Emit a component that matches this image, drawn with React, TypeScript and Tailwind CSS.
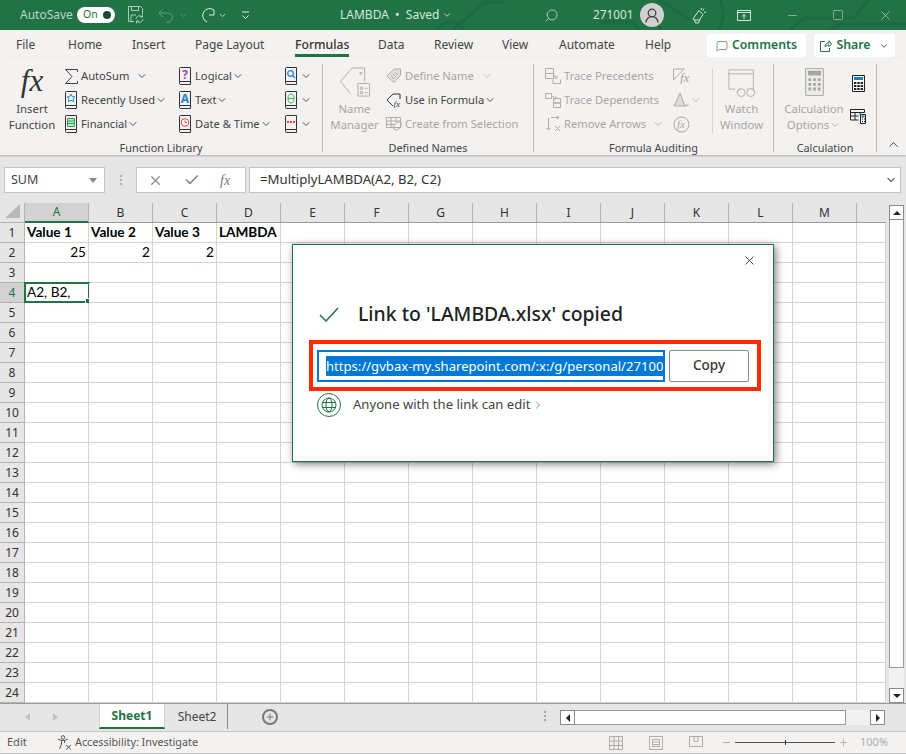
import { ChevronDown, ChevronRight, ChevronUp, X, Check, Search, Minus, Square, Plus, MessageSquare } from 'lucide-react'
import type { ReactNode } from 'react'

const columns = ['A', 'B', 'C', 'D', 'E', 'F', 'G', 'H', 'I', 'J', 'K', 'L', 'M', '']
const rows = Array.from({ length: 24 }, (_, i) => i + 1)

const cells: Record<string, { text: string; bold?: boolean; right?: boolean }> = {
  A1: { text: 'Value 1', bold: true },
  B1: { text: 'Value 2', bold: true },
  C1: { text: 'Value 3', bold: true },
  D1: { text: 'LAMBDA', bold: true },
  A2: { text: '25', right: true },
  B2: { text: '2', right: true },
  C2: { text: '2', right: true },
  A4: { text: 'A2, B2,' },
}

const tabs = [
  { name: 'File', cls: 'w-[52px] ml-4' },
  { name: 'Home', cls: 'w-[64px]' },
  { name: 'Insert', cls: 'w-[63px]' },
  { name: 'Page Layout', cls: 'w-[100px]' },
  { name: 'Formulas', cls: 'w-[83px]', active: true },
  { name: 'Data', cls: 'w-[56px]' },
  { name: 'Review', cls: 'w-[68px]' },
  { name: 'View', cls: 'w-[57px]' },
  { name: 'Automate', cls: 'w-[86px]' },
  { name: 'Help', cls: 'w-[62px]' },
]

function Caret({ grey }: { grey?: boolean }) {
  return <ChevronDown size={12} strokeWidth={1.8} className={`shrink-0 ${grey ? 'text-[#b5b3b1]' : 'text-[#444444]'}`} />
}

// little book used by the function library buttons
function Book({ children }: { children: ReactNode }) {
  return (
    <svg width="14" height="18" viewBox="0 0 14 18" className="shrink-0">
      <path d="M1.500 14.500V1.500a1 1 0 0 1 1-1h10v14h-11zM1.500 14.500v2a1 1 0 0 0 1 1h10v-3" fill="none" stroke="#333" />
      {children}
    </svg>
  )
}

function BookText({ ch, color }: { ch: string; color: string }) {
  return (
    <text x="7" y="11.500" textAnchor="middle" fontSize="12" fontWeight="700" fill={color} fontFamily="Noto Sans, sans-serif">
      {ch}
    </text>
  )
}

function GreyIcon({ d, w = 16 }: { d: string; w?: number }) {
  return (
    <svg width={w} height="16" viewBox={`0 0 ${w} 16`} fill="none" stroke="#b0aeac" className="shrink-0">
      <path d={d} />
    </svg>
  )
}

function RibbonRow({ icon, label, grey, caret, wide }: { icon: ReactNode; label: string; grey?: boolean; caret?: ReactNode; wide?: boolean }) {
  return (
    <div className="flex h-6 items-center">
      <div className={`flex justify-center ${wide ? 'mr-[3px] w-4' : 'mr-[3px] w-[14px]'}`}>{icon}</div>
      <span className={`whitespace-nowrap ${grey ? 'text-[#a8a6a4]' : 'text-[#444444]'}`}>{label}</span>
      {caret ?? null}
    </div>
  )
}

function BigLabel({ lines, grey, caret }: { lines: string[]; grey?: boolean; caret?: boolean }) {
  return (
    <div className={`mt-[2px] flex flex-col items-center text-[11.4px] leading-4 ${grey ? 'text-[#a8a6a4]' : 'text-[#444444]'}`}>
      {lines.map((l, i) => (
        <span key={l} className="flex items-center whitespace-nowrap">
          {l}
          {caret && i === lines.length - 1 && <Caret grey />}
        </span>
      ))}
    </div>
  )
}

function Group({ cls, label, children }: { cls: string; label: string; children: ReactNode }) {
  return (
    <div className={`flex h-[88px] shrink-0 flex-col border-r border-[#bdbbb9] ${cls}`}>
      <div className="flex h-[74px] shrink-0">{children}</div>
      <div className="h-[14px] text-center text-[10.9px] leading-[20px] text-[#444444]">{label}</div>
    </div>
  )
}

function TitleBar() {
  return (
    <div className="relative flex h-[30px] items-center overflow-hidden bg-[#217346] text-white">
      {/* faint circuit artwork behind the title bar */}
      <svg className="absolute inset-0" width="906" height="30" fill="none" stroke="#1d6a40" strokeWidth="3">
        <circle cx="690" cy="14" r="33" />
        <circle cx="450" cy="36" r="14" />
        <path d="M453 30l32-28h20M640 30l-8-8H600M790 30l14-12h50l14-18M830 30l10-6h66M660 0l30 20" />
      </svg>
      <div className="relative ml-5 w-[57px] text-[12px] text-[#b7d5c4]">AutoSave</div>
      <div className="relative flex h-4 w-[38px] items-center justify-between rounded-full bg-white pl-[6px] pr-1 text-[10.5px] text-[#217346]">
        On
        <span className="h-2 w-2 rounded-full bg-[#1c4a32]" />
      </div>
      <svg className="relative ml-[13px]" width="16" height="18" viewBox="0 0 16 18" fill="none" stroke="#a9cdb9">
        <path d="M6 15.500H.5V.5h12l2 2V8M3.500 .5v4h7v-4M3 15v-6h5" />
        <path d="M8 13a3.500 3.500 0 0 1 6-2.200M15 13a3.500 3.500 0 0 1-6 2.200M14.500 8.500v2.500H12M8.500 17.500V15H11" />
      </svg>
      <svg className="relative ml-[14px]" width="16" height="16" viewBox="0 0 16 16" fill="none" stroke="#5f9d7d">
        <path d="M1 6h9a4.500 4.500 0 0 1 0 9H8M1 6l4-4M1 6l4 4" />
      </svg>
      <ChevronDown size={9} className="relative ml-[5px] text-[#5f9d7d]" />
      <svg className="relative ml-[11px]" width="16" height="16" viewBox="0 0 16 16" fill="none" stroke="#e3efe8">
        <path d="M15 3A7 7 0 1 0 8 15M15 3v5h-5" />
      </svg>
      <ChevronDown size={9} className="relative ml-[3px] text-[#e3efe8]" />
      <svg className="relative ml-[14px]" width="9" height="9" viewBox="0 0 9 9" fill="none" stroke="#e3efe8">
        <path d="M1 1h7M1.500 4.500L4.500 7.500l3-3" />
      </svg>
      <div className="relative ml-[90px] flex w-[204px] items-center gap-[3px] whitespace-nowrap text-[12px] text-[#d5e6dc]">
        LAMBDA&nbsp;&nbsp;•&nbsp;&nbsp;Saved
        <ChevronDown size={10} />
      </div>
      <Search size={15} className="relative -scale-x-100 text-[#c7dfd1]" strokeWidth={1.2} />
      <div className="relative ml-[34px] w-[47px] text-[11.8px] text-[#d5e6dc]">271001</div>
      <div className="relative flex h-6 w-6 items-center justify-center rounded-full bg-[#d0d0d0]">
        <svg width="14" height="15" viewBox="0 0 14 15" fill="none" stroke="#3a3a3a" strokeWidth="1.200">
          <circle cx="7" cy="5" r="3.800" />
          <path d="M1 14.500a6 6 0 0 1 12 0" />
        </svg>
      </div>
      <svg className="relative ml-[26px]" width="17" height="17" viewBox="0 0 17 17" fill="none" stroke="#d5e6dc">
        <path d="M9 3.500l4 4-3.500 5.500H4L3 12zM4.500 13l1 3h3l1-3M11 1l.8 2M14 1.500l-1 2M16 5l-2 .5" />
      </svg>
      <svg className="relative ml-[30px]" width="14" height="11" viewBox="0 0 14 11" fill="none" stroke="#d5e6dc">
        <path d="M.5.5h13v10H.5zM.5 2.500h13M7 9V4.500M5 6.500l2-2 2 2" />
      </svg>
      <Minus size={13} strokeWidth={1} className="relative ml-[35px] text-[#d5e6dc]" />
      <Square size={12} strokeWidth={1} className="relative ml-[33px] text-[#d5e6dc]" />
      <X size={15} strokeWidth={1} className="relative ml-[34px] text-[#d5e6dc]" />
    </div>
  )
}

function TabStrip() {
  return (
    <div className="flex h-[27px] bg-[#f3f2f1] text-[12px] text-[#444444]">
      {tabs.map((t) => (
        <div key={t.name} className={t.cls}>
          <div className={`inline-flex h-[27px] items-center whitespace-nowrap border-b-[3px] pt-[6px] ${t.active ? 'border-[#217346] text-[12.2px] font-medium text-[#333333]' : 'border-transparent'}`}>
            {t.name}
          </div>
        </div>
      ))}
      <div className="flex h-[23px] w-[99px] items-center justify-center gap-1 self-end rounded-[2px] bg-white text-[12.3px] font-semibold text-[#217346]">
        <MessageSquare size={12} strokeWidth={1.3} />
        Comments
      </div>
      <div className="ml-[8px] flex h-[23px] w-[81px] items-center justify-center gap-1 self-end rounded-[2px] bg-white text-[12.3px] font-semibold text-[#217346]">
        <svg width="12" height="12" viewBox="0 0 12 12" fill="none" stroke="#217346">
          <path d="M5 1.500H.5v10h9V8M5 7c0-3 2-4 4-4V.8L11.500 4 9 6.700V5c-2 0-3 .8-4 2z" />
        </svg>
        Share
        <ChevronDown size={10} className="ml-1 text-[#333333]" />
      </div>
    </div>
  )
}

function Ribbon() {
  return (
    <div className="flex h-[98px] items-start bg-[#f3f2f1] pt-[7px] text-[11.2px] shadow-[0_1px_2px_rgba(0,0,0,0.25)]">
      <Group cls="w-[323px]" label="Function Library">
        <div className="flex w-[64px] flex-col items-center">
          <div className="h-[35px] shrink-0 text-center font-['Liberation_Serif',serif] text-[31px] italic leading-[34px] text-[#333333]">fx</div>
          <BigLabel lines={['Insert', 'Function']} />
        </div>
        <div className="flex w-[114px] flex-col">
          <RibbonRow
            label="AutoSum"
            icon={
              <svg width="13" height="15" viewBox="0 0 13 15" fill="none" stroke="#444444" className="shrink-0">
                <path d="M12.500 3V.5H.5L7 7.500.5 14.500h12V12" />
              </svg>
            }
            caret={<span className="ml-[7px]"><Caret /></span>}
          />
          <RibbonRow
            label="Recently Used"
            icon={
              <Book>
                <path d="M7 3l1.200 2.600 2.800.3-2 1.900.6 2.800L7 9.200 4.400 10.600l.6-2.800-2-1.900 2.800-.3z" fill="#fff" stroke="#1e88d8" />
              </Book>
            }
            caret={<Caret />}
          />
          <RibbonRow
            label="Financial"
            icon={
              <Book>
                <path d="M3.500 3.500h7v8h-7zM3.500 6h7M3.500 8.500h7" fill="#bfe3c9" stroke="#2f9e57" />
              </Book>
            }
            caret={<Caret />}
          />
        </div>
        <div className="flex w-[106px] flex-col">
          <RibbonRow label="Logical" icon={<Book><BookText ch="?" color="#a843c2" /></Book>} caret={<Caret />} />
          <RibbonRow label="Text" icon={<Book><BookText ch="A" color="#1e88d8" /></Book>} caret={<Caret />} />
          <RibbonRow
            label="Date & Time"
            icon={
              <Book>
                <circle cx="7" cy="7.500" r="3.800" fill="#fff" stroke="#e8443a" />
                <path d="M7 5.500v2h2" stroke="#e8443a" fill="none" />
              </Book>
            }
            caret={<Caret />}
          />
        </div>
        <div className="flex w-[38px] flex-col">
          <div className="flex h-6 items-center gap-[2px]">
            <Book>
              <circle cx="6.500" cy="6.500" r="2.800" fill="none" stroke="#1e88d8" strokeWidth="1.300" />
              <path d="M8.500 8.500l2.500 2.500" stroke="#1e88d8" strokeWidth="1.500" />
            </Book>
            <Caret />
          </div>
          <div className="flex h-6 items-center gap-[2px]">
            <Book>
              <ellipse cx="7" cy="7.500" rx="3" ry="4.500" fill="none" stroke="#3fae68" />
              <path d="M4 7.500h6" stroke="#3fae68" />
            </Book>
            <Caret />
          </div>
          <div className="flex h-6 items-center gap-[2px]">
            <Book>
              <path d="M3 7h2M6 7h2M9 7h2" stroke="#e8443a" strokeWidth="2" />
            </Book>
            <Caret />
          </div>
        </div>
      </Group>
      <Group cls="w-[211px]" label="Defined Names">
        <div className="flex w-[63px] flex-col items-center">
          <svg width="32" height="31" viewBox="0 0 32 32" fill="none" stroke="#b0aeac" className="mb-[1px] mt-[3px] shrink-0">
            <path d="M11 27L1 15 13 1h13v14M22 5.500a1 1 0 1 0 .1 0" />
            <path d="M19 17h12v13H19zM21.500 21h2.500v2h-2.500zM21.500 25.500h2.500v2h-2.500zM26 22h3M26 26.500h3" />
          </svg>
          <BigLabel grey lines={['Name', 'Manager']} />
        </div>
        <div className="flex flex-col">
          <RibbonRow
            wide
            grey
            label="Define Name"
            icon={
              <svg width="16" height="16" viewBox="0 0 16 16" fill="#e2e0de" stroke="#b0aeac">
                <path d="M1 8L8 1h6.500v6L8 14.500z" />
                <path d="M8 11L5 8M10 9L7 6M12 7L9 4" />
              </svg>
            }
            caret={<span className="ml-[7px]"><Caret grey /></span>}
          />
          <RibbonRow
            wide
            label="Use in Formula"
            icon={
              <svg width="16" height="16" viewBox="0 0 16 16" fill="none" stroke="#333333">
                <path d="M7 14L1 8l6-6h7v5" />
                <text x="7.500" y="15" fontSize="9" fontStyle="italic" fontFamily="Liberation Serif, serif" fill="#333333" stroke="none">fx</text>
              </svg>
            }
            caret={<Caret />}
          />
          <RibbonRow
            wide
            grey
            label="Create from Selection"
            icon={<GreyIcon d="M.5 1.500h14v10H.5zM.5 5h14M.5 8.500h8M5 1.500v10M10 1.500v4M9 14l-2-3 4-5h4v5l-4 3z" />}
          />
        </div>
      </Group>
      <Group cls="w-[240px]" label="Formula Auditing">
        <div className="flex w-[131px] flex-col pl-[11px]">
          <RibbonRow wide grey label="Trace Precedents" icon={<GreyIcon d="M.5.500h8v5h-8zM.5 5.500h8v5h-8zM9 7l3 3M12 7.500V10H9.500M8 11.500v4h7.500v-4" />} />
          <RibbonRow wide grey label="Trace Dependents" icon={<GreyIcon d="M.5 1.500h6v5h-6zM7 4l4 3M11 4.500V7H8.500M8.500 6.500h7v4.500h-7zM8.500 11h7v4.500h-7z" />} />
          <RibbonRow
            wide
            grey
            label="Remove Arrows"
            icon={<GreyIcon d="M3.500 2v12M1.500 12l2 2 2-2M6 1.500h8M12 0l2 1.500L12 3M10 10l5 5M15 10l-5 5" />}
            caret={<span className="ml-[6px]"><Caret grey /></span>}
          />
        </div>
        <div className="flex w-[47px] flex-col pl-[8px]">
          <div className="flex h-6 items-center">
            <svg width="18" height="16" viewBox="0 0 18 16" fill="none" stroke="#b0aeac">
              <path d="M.5 1h11M.5 1v11M.5 12L11 1" />
              <text x="7" y="14" fontSize="13" fontStyle="italic" fontFamily="Liberation Serif, serif" fill="#a8a6a4" stroke="none">fx</text>
            </svg>
          </div>
          <div className="flex h-6 items-center gap-[1px]">
            <svg width="16" height="16" viewBox="0 0 16 16" fill="#dddbd9" stroke="#b0aeac" className="shrink-0">
              <path d="M7 1L1 14h11zM11 13l2 1.500 3-3" />
            </svg>
            <Caret grey />
          </div>
          <div className="flex h-6 items-center">
            <svg width="17" height="17" viewBox="0 0 17 17" fill="none" stroke="#a8a6a4">
              <circle cx="8.500" cy="8.500" r="7.500" />
              <text x="4" y="12" fontSize="11" fontStyle="italic" fontFamily="Liberation Serif, serif" fill="#a8a6a4" stroke="none">fx</text>
            </svg>
          </div>
        </div>
        <div className="my-[5px] h-[64px] w-px bg-[#d5d3d1]" />
        <div className="flex w-[57px] flex-col items-center">
          <svg width="30" height="28" viewBox="0 0 32 32" fill="none" stroke="#b0aeac" className="mb-[2px] mt-[5px] shrink-0">
            <path d="M1 1h28v22h-8M1 1v22h7M1 5.500h28" />
            <circle cx="15" cy="27" r="4.500" fill="#f3f2f1" />
            <circle cx="26" cy="27" r="4.500" fill="#f3f2f1" />
            <path d="M10 27l4-5M31 27l-4-5" />
          </svg>
          <BigLabel grey lines={['Watch', 'Window']} />
        </div>
      </Group>
      <Group cls="w-[103px]" label="Calculation">
        <div className="ml-[4px] flex w-[72px] flex-col items-center">
          <svg width="19" height="28" viewBox="0 0 20 30" fill="#a8a6a4" stroke="none" className="mb-[3px] mt-[4px] shrink-0">
            <path d="M.5.500h19v29H.5z" fill="#ececeb" stroke="#a8a6a4" />
            <path d="M3 3h14v5H3zM3.500 11h3v3h-3zM8.500 11h3v3h-3zM13.500 11h3v3h-3zM3.500 16h3v3h-3zM8.500 16h3v3h-3zM13.500 16h3v3h-3zM3.500 21h3v3h-3zM8.500 21h3v3h-3zM13.500 21h3v3h-3z" />
          </svg>
          <BigLabel grey lines={['Calculation', 'Options']} caret />
        </div>
        <div className="flex w-4 flex-col items-center gap-[17px] pt-[11px]">
          <svg width="13" height="17" viewBox="0 0 13 17" fill="#222222" className="shrink-0">
            <path d="M.5.500h12v16H.5z" fill="#fff" stroke="#222222" />
            <path d="M2 2h9v3H2z" fill="#1e7ec8" />
            <path d="M2 7h2.400v2H2zM5.300 7h2.400v2H5.300zM8.600 7H11v2H8.600zM2 10h2.400v2H2zM5.300 10h2.400v2H5.300zM8.600 10H11v2H8.600zM2 13h2.400v2H2zM5.300 13h2.400v2H5.300zM8.600 13H11v2H8.600z" />
          </svg>
          <svg width="16" height="15" viewBox="0 0 16 15" fill="none" stroke="#222222" className="shrink-0">
            <path d="M.5.500h14v3H.5zM.5 3.500V11h8M.5 7h8M5 3.500V11M10 3.500v2M10.500 5.500h5v9h-5z" />
            <path d="M11.500 6.500h3v2h-3z" fill="#1e7ec8" stroke="none" />
            <path d="M12 10h1M14 10h1M12 12.500h1M14 12.500h1" />
          </svg>
        </div>
      </Group>
      <div className="flex h-[88px] flex-1 items-end justify-end pr-[5px]">
        <ChevronUp size={15} strokeWidth={1.4} className="text-[#333333]" />
      </div>
    </div>
  )
}

function FormulaBar() {
  return (
    <div className="flex h-[26px] pl-1 pr-[5px]">
      <div className="flex w-[101px] items-center justify-between border border-[#c6c6c6] bg-white pl-[6px] pr-[7px] text-[12.5px] text-[#444444]">
        SUM
        <span className="h-0 w-0 border-x-[4px] border-t-[5px] border-x-transparent border-t-[#8a8a8a]" />
      </div>
      <div className="flex w-[31px] flex-col items-center justify-center gap-[2px]">
        <span className="h-[2px] w-[2px] bg-[#b0b0b0]" />
        <span className="h-[2px] w-[2px] bg-[#b0b0b0]" />
        <span className="h-[2px] w-[2px] bg-[#b0b0b0]" />
      </div>
      <div className="flex w-[110px] items-center border border-[#c6c6c6] bg-white text-[#8a8a8a]">
        <X size={15} strokeWidth={2.2} className="ml-[11px]" />
        <Check size={16} strokeWidth={2.6} className="ml-[21px]" />
        <span className="ml-[20px] font-['Liberation_Serif',serif] text-[14px] italic text-[#777777]">fx</span>
      </div>
      <div className="ml-[3px] flex flex-1 items-center justify-between border border-[#c6c6c6] bg-white pl-[10px] pr-[3px] text-[13.2px] text-[#333333]">
        =MultiplyLAMBDA(A2, B2, C2)
        <ChevronDown size={12} strokeWidth={3} className="text-[#777777]" />
      </div>
    </div>
  )
}

function Sheet() {
  return (
    <div className="grid w-[886px] grid-cols-[25px_repeat(13,64px)_29px] grid-rows-[20px_repeat(24,20px)]">
      <div className="flex items-end justify-end border-b border-r border-[#b4b4b4] bg-[#e6e6e6] p-[3px]">
        <span className="mb-px mr-px h-0 w-0 border-b-[14px] border-l-[15px] border-b-[#b9b9b9] border-l-transparent" />
      </div>
      {columns.map((c, i) => (
        <div
          key={i}
          className={`flex items-center justify-center border-b ${i === 13 ? '' : 'border-r border-r-[#b4b4b4]'} ${c === 'A' ? 'border-b-2 border-b-[#217346] bg-[#d2d2d2] text-[#217346]' : 'border-b-[#9a9a9a] bg-[#e6e6e6] text-[#333333]'} text-[12px]`}
        >
          {c}
        </div>
      ))}
      {rows.map((r) => (
        <div key={r} className="contents">
          <div className={`flex items-center justify-center border-b border-r border-[#b4b4b4] text-[12px] ${r === 4 ? 'bg-[#d2d2d2] text-[#217346]' : 'bg-[#e6e6e6] text-[#333333]'}`}>
            {r}
          </div>
          {columns.map((c, i) => {
            const cell = cells[`${c}${r}`]
            const selected = c === 'A' && r === 4
            return (
              <div
                key={i}
                className={`relative flex items-center overflow-visible whitespace-nowrap border-b border-r border-[#d4d4d4] bg-white px-[2px] font-['Lato',sans-serif] text-[13.6px] text-black ${cell?.right ? 'justify-end' : ''} ${cell?.bold ? 'font-bold' : ''}`}
              >
                {cell?.text}
                {selected && (
                  <span className="absolute -left-[1px] -top-[1px] h-[21px] w-[66px] border-2 border-[#217346]">
                    <span className="absolute -bottom-[3px] -right-[3px] h-[6px] w-[6px] border border-white bg-[#217346]" />
                  </span>
                )}
              </div>
            )
          })}
        </div>
      ))}
    </div>
  )
}

function VerticalScroll() {
  return (
    <div className="ml-[3px] flex h-[498px] w-[15px] flex-col">
      <div className="flex h-[15px] items-center justify-center border border-[#8a8a8a] bg-white">
        <span className="h-0 w-0 border-x-[4px] border-b-[4px] border-x-transparent border-b-[#222222]" />
      </div>
      <div className="h-[448px] border-x border-b border-[#9a9a9a] bg-white" />
      <div className="flex-1 bg-[#f1f1f1]" />
      <div className="flex h-[15px] items-center justify-center border border-[#8a8a8a] bg-white">
        <span className="h-0 w-0 border-x-[4px] border-t-[4px] border-x-transparent border-t-[#222222]" />
      </div>
    </div>
  )
}

function SheetTabs() {
  return (
    <div className="flex h-[28px] border-t border-[#9a9a9a] bg-[#e6e6e6]">
      <div className="flex w-[99px] items-start gap-[23px] pl-[25px] pt-[9px]">
        <span className="h-0 w-0 border-y-[4px] border-r-[5px] border-y-transparent border-r-[#c2c2c2]" />
        <span className="h-0 w-0 border-y-[4px] border-l-[5px] border-y-transparent border-l-[#c2c2c2]" />
      </div>
      <div className="flex h-[25px] w-[66px] items-center justify-center border-x border-b-2 border-x-[#cfcfcf] border-b-[#217346] bg-white text-[12px] font-bold text-[#217346]">
        Sheet1
      </div>
      <div className="flex h-[25px] w-[63px] items-center justify-center border-r border-[#8a8a8a] pl-[2px] text-[12px] text-[#444444]">
        Sheet2
      </div>
      <div className="ml-[34px] mt-[5px] flex h-4 w-4 items-center justify-center rounded-full border-2 border-[#7a7a7a]">
        <Plus size={10} strokeWidth={2.5} className="text-[#7a7a7a]" />
      </div>
      <div className="ml-[266px] flex flex-col gap-[2px] pt-[7px]">
        <span className="h-[2px] w-[2px] bg-[#a8a8a8]" />
        <span className="h-[2px] w-[2px] bg-[#a8a8a8]" />
        <span className="h-[2px] w-[2px] bg-[#a8a8a8]" />
      </div>
      <div className="ml-[14px] mt-[6px] flex h-[15px] w-[325px]">
        <div className="flex w-[15px] items-center justify-center border border-[#8a8a8a] bg-white">
          <span className="h-0 w-0 border-y-[4px] border-r-[4px] border-y-transparent border-r-[#222222]" />
        </div>
        <div className="w-[271px] border-y border-r border-[#9a9a9a] bg-white" />
        <div className="flex-1 bg-[#f1f1f1]" />
        <div className="flex w-[15px] items-center justify-center border border-[#8a8a8a] bg-white">
          <span className="h-0 w-0 border-y-[4px] border-l-[4px] border-y-transparent border-l-[#222222]" />
        </div>
      </div>
    </div>
  )
}

function StatusBar() {
  return (
    <div className="flex h-[23px] items-center border-y border-[#c6c6c6] bg-[#f3f2f1] text-[11px] text-[#555555]">
      <span className="ml-[7px] w-[50px]">Edit</span>
      <svg width="15" height="15" viewBox="0 0 15 15" fill="none" stroke="#555555" className="shrink-0">
        <circle cx="6" cy="2.500" r="1.800" />
        <path d="M1 4l3.500 1.500h3L11 4M4.500 5.500V9l-2 5M7.500 5.500V8M9 10l5 4.500M14 10l-5 4.500" />
      </svg>
      <span className="ml-[3px] w-[534px] text-[10.8px]">Accessibility: Investigate</span>
      <svg width="14" height="14" viewBox="0 0 14 14" fill="none" stroke="#b0aeac" className="shrink-0">
        <path d="M.5.500h13v13H.5zM.5 5h13M.5 9.500h13M5 .5v13M9.500 .5v13" />
      </svg>
      <svg width="14" height="14" viewBox="0 0 14 14" fill="none" stroke="#b0aeac" className="ml-[26px] shrink-0">
        <path d="M.5.500h13v13H.5zM3.500 3.500h7v7h-7zM3.500 6h7M3.500 8.500h7" />
      </svg>
      <svg width="14" height="14" viewBox="0 0 14 14" fill="none" stroke="#b0aeac" className="ml-[26px] shrink-0">
        <path d="M.5.500h13v10H.5zM5 .5v5h4v-5" />
      </svg>
      <Minus size={11} className="ml-[18px] text-[#b0aeac]" />
      <div className="relative ml-[3px] h-px w-[100px] bg-[#555555]">
        <span className="absolute -top-[2px] left-[50px] h-[5px] w-px bg-[#333333]" />
      </div>
      <Plus size={11} className="ml-[3px] text-[#b0aeac]" />
      <span className="ml-[11px] text-[#b0aeac]">100%</span>
    </div>
  )
}

function LinkDialog() {
  return (
    <div className="absolute left-[292px] top-[244px] flex h-[218px] w-[482px] flex-col border border-[#217346] bg-white shadow-[2px_2px_8px_rgba(0,0,0,0.5)]">
      <div className="flex h-[38px] justify-end pr-[16px] pt-[8px]">
        <X size={15} strokeWidth={1.3} className="text-[#222222]" />
      </div>
      <div className="flex h-[57px] pl-[26px] pt-[17px]">
        <div className="flex h-[28px] items-center">
          <svg width="20" height="15" viewBox="0 0 20 15" fill="none" stroke="#217346" strokeWidth="1.500">
            <path d="M1 8l6 6L19 1" />
          </svg>
          <span className="ml-[19px] whitespace-nowrap text-[19.4px] font-medium leading-[28px] text-[#222222]">
            Link to 'LAMBDA.xlsx' copied
          </span>
        </div>
      </div>
      <div className="mx-[16px] flex h-[51px] w-[452px] items-center gap-[4px] border-4 border-[#ff2a00] pl-[4px]">
        <div className="flex h-[32px] w-[348px] items-center overflow-hidden border-2 border-[#0078d4] pl-[7px]">
          <span className="whitespace-nowrap bg-[#0078d4] pt-px text-[13.1px] leading-[19px] text-white">
            https://gvbax-my.sharepoint.com/:x:/g/personal/27100
          </span>
        </div>
        <div className="flex h-[32px] w-[80px] items-center justify-center rounded-[2px] border border-[#8a8886] text-[13.5px] font-medium text-[#333333]">
          Copy
        </div>
      </div>
      <div className="mt-[2px] flex items-center pl-[24px]">
        <span className="flex h-6 w-6 items-center justify-center rounded-full border border-[#217346]">
          <svg width="16" height="16" viewBox="0 0 16 16" fill="none" stroke="#217346">
            <circle cx="8" cy="8" r="7" />
            <ellipse cx="8" cy="8" rx="3" ry="7" />
            <path d="M1 5.500h14M1 10.500h14" />
          </svg>
        </span>
        <span className="ml-[12px] whitespace-nowrap text-[13.1px] text-[#444444]">Anyone with the link can edit</span>
        <ChevronRight size={12} className="ml-[2px] text-[#8a8886]" />
      </div>
    </div>
  )
}

export default function App() {
  return (
    <div className="relative h-[754px] w-[906px] overflow-hidden bg-[#e6e6e6] font-['Noto_Sans',sans-serif]">
      <TitleBar />
      <TabStrip />
      <Ribbon />
      <div className="h-[12px]" />
      <FormulaBar />
      <div className="flex h-[510px] pt-[10px]">
        <Sheet />
        <div className="pt-[2px]">
          <VerticalScroll />
        </div>
      </div>
      <SheetTabs />
      <StatusBar />
      <LinkDialog />
    </div>
  )
}
